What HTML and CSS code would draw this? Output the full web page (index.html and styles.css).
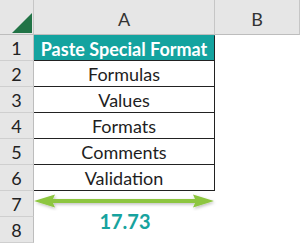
FILE: index.html
```html
<!DOCTYPE html>
<html lang="en">
<head>
    <meta charset="UTF-8">
    <title>Paste Special Format</title>
    <link rel="stylesheet" href="styles.css">
</head>
<body>
    <div class="sheet">
        <div class="corner"><span class="tri"></span></div>
        <div class="colhead">A</div>
        <div class="colhead">B</div>

        <div class="rowhead">1</div>
        <div class="cell title">Paste Special Format</div>
        <div class="blank"></div>

        <div class="rowhead">2</div>
        <div class="cell">Formulas</div>
        <div class="blank"></div>

        <div class="rowhead">3</div>
        <div class="cell">Values</div>
        <div class="blank"></div>

        <div class="rowhead">4</div>
        <div class="cell">Formats</div>
        <div class="blank"></div>

        <div class="rowhead">5</div>
        <div class="cell">Comments</div>
        <div class="blank"></div>

        <div class="rowhead">6</div>
        <div class="cell">Validation</div>
        <div class="blank"></div>

        <div class="rowhead">7</div>
        <div class="measure">
            <svg class="arrow" width="186" height="20" viewBox="0 0 186 20">
                <defs>
                    <filter id="sh" x="-5%" y="-50%" width="110%" height="200%">
                        <feDropShadow dx="1" dy="1.5" stdDeviation="1.5" flood-color="#000" flood-opacity="0.25"/>
                    </filter>
                </defs>
                <path d="M3 10 L24 3.5 L22 8 L164 8 L162 3.5 L183 10 L162 16.5 L164 12 L22 12 L24 16.5 Z" fill="#8dc63f" filter="url(#sh)"/>
            </svg>
            <div class="width">17.73</div>
        </div>
        <div class="blank span"></div>

        <div class="rowhead">8</div>
    </div>
</body>
</html>
```

FILE: styles.css
```css
body {
    margin: 0;
    background: #fff;
    font-family: Lato, "Open Sans", sans-serif;
    color: #1e1e1e;
}
.sheet {
    display: grid;
    grid-template-columns: 34px 181px 85px;
    grid-template-rows: 35px repeat(8, 26px);
    width: 300px;
    height: 244px;
    overflow: hidden;
}
.corner {
    background: #e6e6e6;
    border-right: 1px solid #c6c6c6;
    border-bottom: 1px solid #bdbdbd;
    box-sizing: border-box;
    position: relative;
}
.tri {
    position: absolute;
    left: 12px;
    top: 13px;
    width: 0;
    height: 0;
    border-left: 20px solid transparent;
    border-bottom: 20px solid #217346;
}
.colhead {
    background: #e6e6e6;
    border-right: 1px solid #c6c6c6;
    border-bottom: 1px solid #bdbdbd;
    box-sizing: border-box;
    display: flex;
    align-items: flex-end;
    justify-content: center;
    padding-bottom: 4px;
    font-size: 18px;
    color: #333;
}
.rowhead {
    background: #e6e6e6;
    border-right: 1px solid #bdbdbd;
    border-bottom: 1px solid #cfcfcf;
    box-sizing: border-box;
    display: flex;
    align-items: center;
    justify-content: center;
    font-size: 18px;
    color: #222;
}
.cell {
    border-bottom: 1px solid #222;
    border-right: 1px solid #222;
    box-sizing: border-box;
    display: flex;
    align-items: center;
    justify-content: center;
    font-size: 18px;
    padding-top: 1px;
}
.title {
    background: #14a39f;
    color: #fff;
    font-weight: bold;
    font-size: 18px;
    border-top: 1px solid #14a39f;
}
.measure {
    grid-row: span 2;
    display: flex;
    flex-direction: column;
    align-items: center;
    margin-left: -1px;
}
.arrow {
    display: block;
}
.width {
    color: #17a39e;
    font-weight: bold;
    font-size: 20px;
    margin-top: -2px;
    margin-left: 2px;
}
.span {
    grid-row: span 2;
}
```
